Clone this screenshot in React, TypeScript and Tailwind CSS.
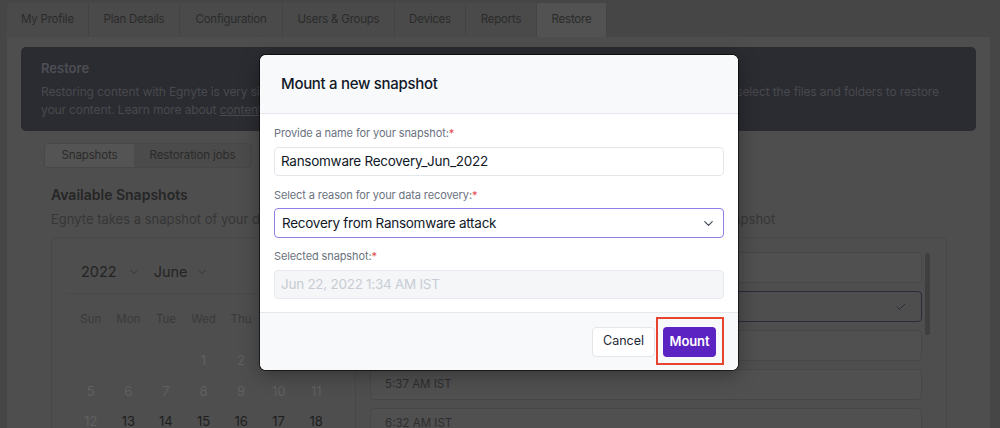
import { Check, ChevronDown } from "lucide-react";

const tabs = [
  { label: "My Profile", w: "w-[82px]" },
  { label: "Plan Details", w: "w-[91px]" },
  { label: "Configuration", w: "w-[103px]" },
  { label: "Users & Groups", w: "w-[112px]" },
  { label: "Devices", w: "w-[71px]" },
  { label: "Reports", w: "w-[71px]" },
  { label: "Restore", w: "w-[70px]", active: true },
];

const weekdays = ["Sun", "Mon", "Tue", "Wed", "Thu", "Fri", "Sat"];

// June 2022 starts on a Wednesday
const days: (number | null)[] = [null, null, null, 1, 2, 3, 4, 5, 6, 7, 8, 9, 10, 11, 12, 13, 14, 15, 16, 17, 18];

const slots = ["1:34 AM IST", "1:34 AM IST", "4:41 AM IST", "5:37 AM IST", "6:32 AM IST"];

function Label({ children }: { children: React.ReactNode }) {
  return (
    <div className="text-[11px] leading-4 tracking-[-0.01em] text-[#6b7280]">
      {children}
      <span className="text-[#e5484d]">*</span>
    </div>
  );
}

export default function App() {
  return (
    <div className="relative h-[428px] w-[1000px] overflow-hidden bg-[#464646] font-['Inter','Noto_Sans',sans-serif]">
      <div className="pl-[7px] pr-[10px] pt-[3px]">
        <div className="flex h-[34px]">
          {tabs.map((t, i) => (
            <div
              key={t.label}
              className={`${t.w} flex items-center justify-center border-r border-[#434343] text-[11.5px] tracking-[-0.02em] text-[#2a2a2a] ${
                t.active ? "bg-[#525252]" : "bg-[#4a4a4a]"
              } ${i === 0 ? "rounded-tl-[4px]" : ""}`}
            >
              {t.label}
            </div>
          ))}
        </div>

        <div className="h-[400px] bg-[#4e4e4e] px-[14px] pt-[10px]">
          <div className="h-[84px] rounded-[5px] bg-[#2b2c31] px-5 pt-[12px]">
            <div className="text-[13px] font-semibold leading-[18px] text-[#4d4e54]">Restore</div>
            <p className="mt-[6px] whitespace-nowrap text-[12px] leading-[17.5px] tracking-[-0.01em] text-[#48494e]">
              Restoring content with Egnyte is very simple and quick. Pick a date and time from the available snapshots, mount it, and then select the files and folders to restore
              <br />
              your content. Learn more about <span className="underline">content restoration</span>.
            </p>
          </div>

          <div className="ml-[23px] mt-[12px] flex h-[25px] w-[208px] overflow-hidden rounded-[4px] border border-[#474747] bg-[#4b4b4b] text-[11.5px] tracking-[-0.01em] text-[#2a2a2a]">
            <div className="flex w-[89px] items-center justify-center bg-[#545454]">Snapshots</div>
            <div className="flex flex-1 items-center justify-center">Restoration jobs</div>
          </div>

          <div className="pl-[30px] pr-[29px]">
            <div className="mt-[17px] text-[14px] font-semibold leading-5 text-[#262626]">Available Snapshots</div>
            <div className="mt-[4px] whitespace-nowrap text-[13px] leading-5 text-[#363636]">
              Egnyte takes a snapshot of your domain every day. Choose a date to view available snapshots, then select a snapshot
            </div>

            <div className="mt-[8px] flex h-[220px] rounded-[5px] border border-[#484848]">
              <div className="w-[304px] shrink-0 border-r border-[#484848] px-[14px] pt-[24px]">
                <div className="flex items-center border-b border-[#494949] pb-[11px] pl-[15px] text-[14.5px] leading-5 text-[#242424]">
                  <span>2022</span>
                  <ChevronDown className="ml-[11px] h-[12px] w-[12px] text-[#2e2e2e]" strokeWidth={1.5} />
                  <span className="ml-[14px]">June</span>
                  <ChevronDown className="ml-[8px] h-[12px] w-[12px] text-[#2e2e2e]" strokeWidth={1.5} />
                </div>
                <div className="grid grid-cols-7 px-[6px] pt-[17px] text-center text-[11.5px] leading-4 text-[#3a3a3a]">
                  {weekdays.map((d) => (
                    <div key={d}>{d}</div>
                  ))}
                </div>
                <div className="mt-[23px] grid grid-cols-7 gap-y-[10.5px] px-[6px] text-center text-[13px] leading-5">
                  {days.map((d, i) => (
                    <div key={i} className={d !== null && d >= 13 ? "text-[#1e1e1e]" : "text-[#606060]"}>
                      {d ?? ""}
                    </div>
                  ))}
                </div>
              </div>

              <div className="flex flex-1 gap-[3px] pl-[14px] pr-[16px] pt-[14px]">
                <div className="flex flex-1 flex-col gap-[8px]">
                  {slots.map((s, i) => (
                    <div
                      key={i}
                      className={`flex h-[31px] shrink-0 items-center justify-between rounded-[4px] border px-[14px] text-[11.5px] text-[#2e2e2e] ${
                        i === 1 ? "border-[#2c2a3b] bg-[#4e4e4e]" : "border-[#474747] bg-[#505050]"
                      }`}
                    >
                      <span>{s}</span>
                      {i === 1 && <Check className="h-[12px] w-[12px] text-[#2c2a3b]" strokeWidth={2} />}
                    </div>
                  ))}
                </div>
                <div className="w-[5px] pt-[1px]">
                  <div className="h-[82px] rounded-full bg-[#3f3f3f]" />
                </div>
              </div>
            </div>
          </div>
        </div>
      </div>

      {/* modal */}
      <div className="absolute left-[260px] top-[55px] w-[478px] overflow-hidden rounded-[6px] bg-white shadow-[0_4px_20px_rgba(0,0,0,0.35)] ring-1 ring-black/60">
        <div className="flex h-[59px] items-center border-b border-[#e4e7ec] bg-[#f8f9fb] px-[21px]">
          <h2 className="text-[15px] font-medium leading-5 tracking-[-0.02em] text-[#111827]">Mount a new snapshot</h2>
        </div>

        <div className="px-[14px] pb-[13px] pt-[11px]">
          <Label>Provide a name for your snapshot:</Label>
          <div className="mt-[6px] flex h-[29px] items-center rounded-[4px] border border-[#e3e6eb] px-[6px] text-[13.5px] tracking-[-0.02em] text-[#111827]">
            Ransomware Recovery_Jun_2022
          </div>

          <div className="mt-[11px]">
            <Label>Select a reason for your data recovery:</Label>
          </div>
          <div className="mt-[5px] flex h-[30px] items-center justify-between rounded-[4px] border border-[#8e7fe6] px-[7px] text-[13.5px] tracking-[-0.02em] text-[#111827]">
            <span>Recovery from Ransomware attack</span>
            <ChevronDown className="h-[15px] w-[15px] text-[#374151]" strokeWidth={1.75} />
          </div>

          <div className="mt-[10px]">
            <Label>Selected snapshot:</Label>
          </div>
          <div className="mt-[6px] flex h-[29px] items-center rounded-[4px] border border-[#e7e9ee] bg-[#f5f6f8] px-[6px] text-[13.5px] tracking-[-0.02em] text-[#c8cdd5]">
            Jun 22, 2022 1:34 AM IST
          </div>
        </div>

        <div className="flex h-[58px] items-center justify-end gap-[8px] border-t border-[#e4e7ec] bg-[#f8f9fb] pr-[22px]">
          <button className="h-[30px] w-[63px] rounded-[4px] border border-[#e3e6eb] bg-white text-[12.5px] text-[#1f2937]">
            Cancel
          </button>
          <div className="relative">
            <button className="h-[30px] w-[53px] rounded-[4px] bg-[#5b23c2] text-[13px] font-semibold tracking-[-0.01em] text-white">
              Mount
            </button>
            <div className="pointer-events-none absolute -bottom-[8px] -left-[7px] -right-[8px] -top-[10px] border-2 border-[#e8432f]" />
          </div>
        </div>
      </div>
    </div>
  );
}
